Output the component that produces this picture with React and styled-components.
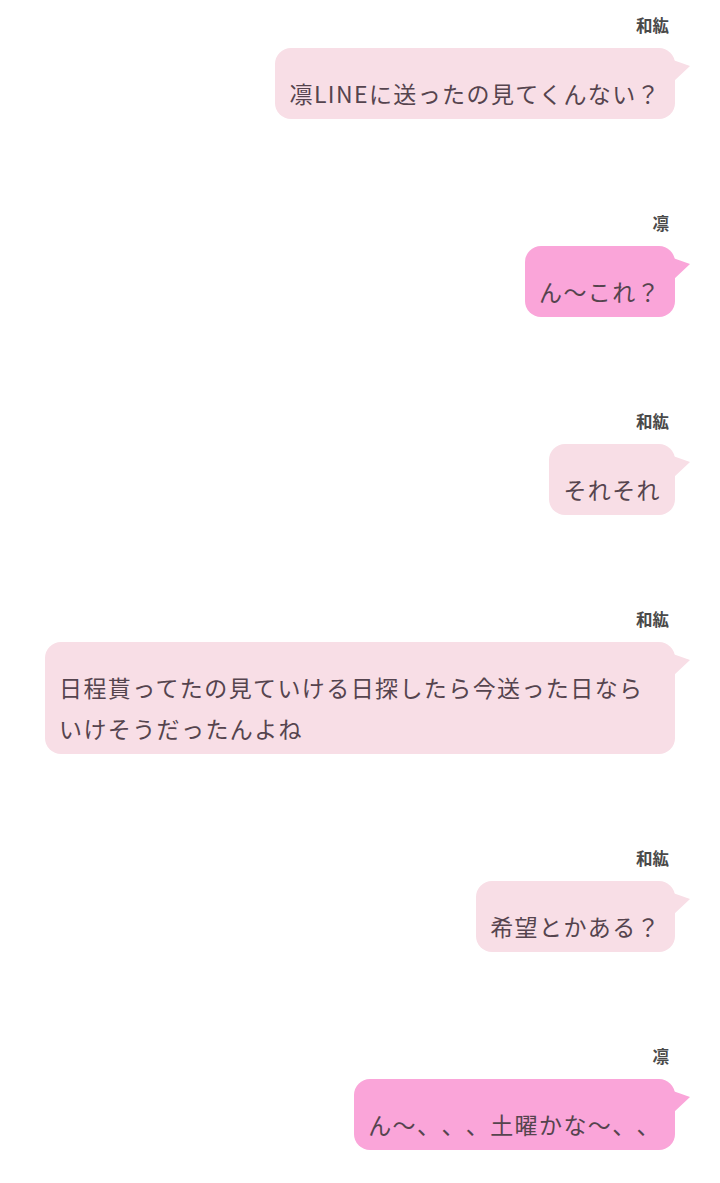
import styled, { createGlobalStyle } from 'styled-components';

const GlobalStyle = createGlobalStyle`
  html, body {
    margin: 0;
    padding: 0;
    background: #ffffff;
  }
  body {
    font-family: "Noto Sans CJK JP", "Noto Sans", sans-serif;
  }
`;

const messages = [
  { name: '和紘', text: '凛LINEに送ったの見てくんない？', hot: false },
  { name: '凛', text: 'ん〜これ？', hot: true },
  { name: '和紘', text: 'それそれ', hot: false },
  { name: '和紘', text: '日程貰ってたの見ていける日探したら今送った日ならいけそうだったんよね', hot: false },
  { name: '和紘', text: '希望とかある？', hot: false },
  { name: '凛', text: 'ん〜、、、土曜かな〜、、', hot: true },
];

const App = () => {
  return (
    <>
      <GlobalStyle />
      <Thread>
        {messages.map((m, i) => (
          <Message key={i}>
            <Name>{m.name}</Name>
            <Bubble $hot={m.hot}>{m.text}</Bubble>
          </Message>
        ))}
      </Thread>
    </>
  );
};

export default App;

const Thread = styled.div`
  display: flex;
  flex-direction: column;
  gap: 93px;
  padding: 14px 45px 40px 0;
`;

const Message = styled.div`
  display: flex;
  flex-direction: column;
  align-items: flex-end;
`;

const Name = styled.div`
  font-size: 16.5px;
  line-height: 22px;
  font-weight: 700;
  color: #4a4a4a;
  margin-right: 6px;
  margin-bottom: 12px;
`;

const Bubble = styled.div`
  position: relative;
  box-sizing: border-box;
  max-width: 630px;
  padding: 25px 14px 5px 14px;
  border-radius: 16px;
  background: ${props => (props.$hot ? '#faa5d9' : '#f8dee6')};
  color: #55444e;
  font-size: 23px;
  line-height: 41px;
  letter-spacing: 1.4px;
  text-spacing-trim: space-all;

  &::after {
    content: '';
    position: absolute;
    top: 12px;
    right: -15px;
    width: 17px;
    height: 22px;
    background: inherit;
    clip-path: polygon(0 0, 100% 6px, 0 100%);
  }
`;
